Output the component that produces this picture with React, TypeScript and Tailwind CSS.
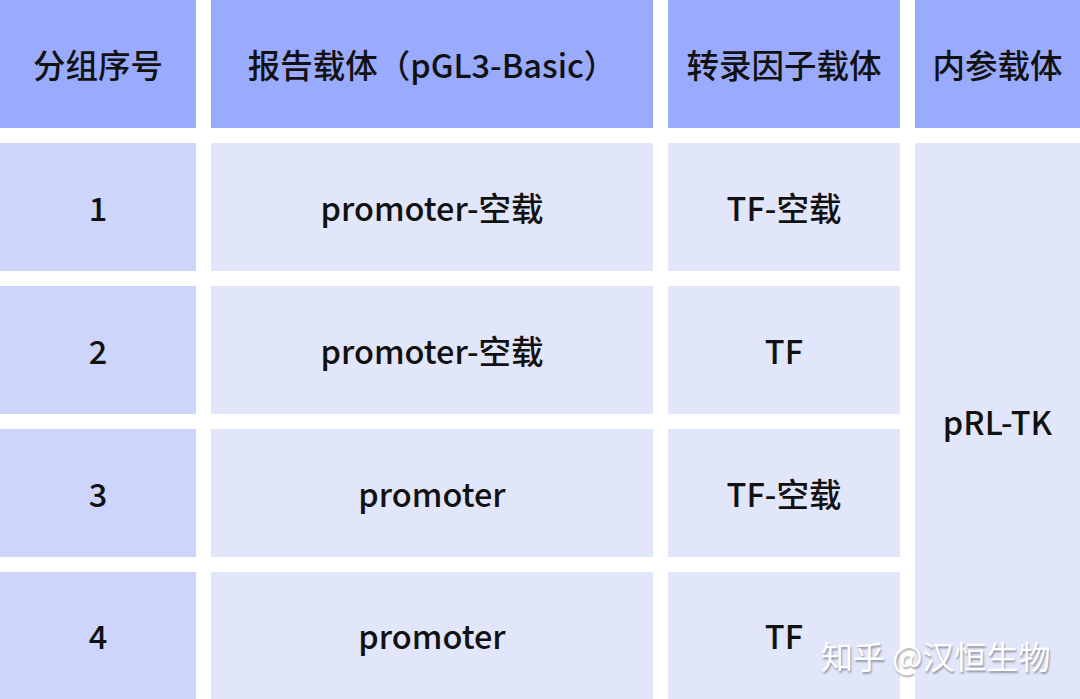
import React from "react";

const font = { fontFamily: '"Noto Sans CJK SC", "Noto Sans", sans-serif' };

export default function App() {
  const rows = [
    ["1", "promoter-空载", "TF-空载"],
    ["2", "promoter-空载", "TF"],
    ["3", "promoter", "TF-空载"],
    ["4", "promoter", "TF"],
  ];
  const cell = "flex items-center justify-center text-[32.5px] font-medium text-[#111]";
  return (
    <div className="relative w-[1080px] h-[699px] bg-white overflow-hidden" style={font}>
      <div className="grid grid-cols-[196px_442px_232px_165px] grid-rows-[128px_128px_128px_128px_127px] gap-x-[15px] gap-y-[15px] h-full">
        <div className={`${cell} bg-[#9aabfd]`}>分组序号</div>
        <div className={`${cell} bg-[#9aabfd]`}>报告载体（pGL3-Basic）</div>
        <div className={`${cell} bg-[#9aabfd]`}>转录因子载体</div>
        <div className={`${cell} bg-[#9aabfd]`}>内参载体</div>
        {rows.map((r, i) => (
          <React.Fragment key={i}>
            <div className={`${cell} bg-[#cdd5fc]`}>{r[0]}</div>
            <div className={`${cell} bg-[#e2e6fb]`}>{r[1]}</div>
            <div className={`${cell} bg-[#e2e6fb]`}>{r[2]}</div>
            {i === 0 && (
              <div className={`${cell} bg-[#e2e6fb] row-span-4`}>pRL-TK</div>
            )}
          </React.Fragment>
        ))}
      </div>
      <div
        className="absolute left-[821px] top-[631px] text-[32px] text-white"
        style={{ ...font, textShadow: "1px 2px 2px rgba(0,0,0,0.35)" }}
      >
        知乎 @汉恒生物
      </div>
    </div>
  );
}
